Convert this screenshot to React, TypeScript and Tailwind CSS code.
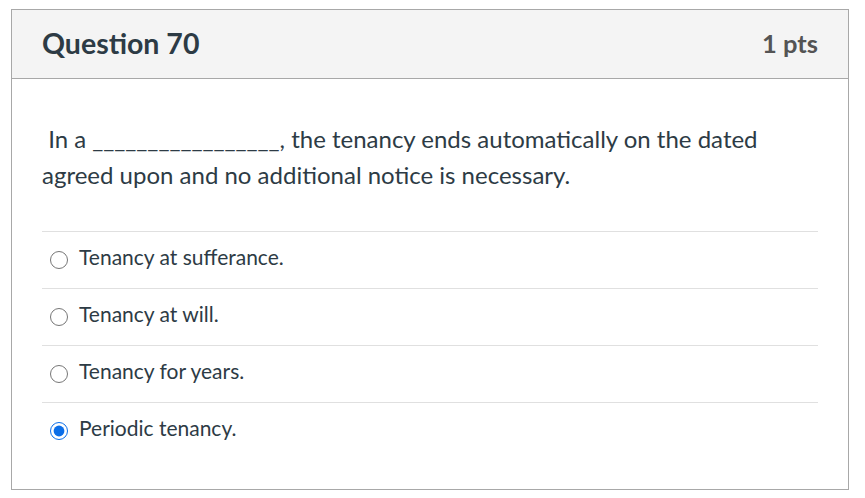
import { useState } from "react";

export default function App() {
  const [selected, setSelected] = useState(3);

  const answers = [
    "Tenancy at sufferance.",
    "Tenancy at will.",
    "Tenancy for years.",
    "Periodic tenancy.",
  ];

  return (
    <div className="w-[865px] h-[498px] bg-white pt-[9px] pl-[11px] font-['Lato','Open_Sans',sans-serif]">
      <div className="w-[838px] h-[481px] border border-[#a8a8a8] flex flex-col">
        <div className="h-[69px] bg-[#f4f4f4] border-b border-[#a8a8a8] flex items-center justify-between pl-[30px] pr-[30px] pb-[2px]">
          <h2 className="text-[28.5px] font-bold text-[#2d3b45]">Question 70</h2>
          <span className="text-[25.5px] font-bold text-[#545454]">1 pts</span>
        </div>

        <div className="px-[30px] pt-[42px]">
          <p className="text-[24px] leading-[36px] text-[#2d3b45]">
            &nbsp;In a _________________, the tenancy ends automatically on the dated agreed upon and no additional notice is necessary.
          </p>

          <div className="mt-[38px]">
            {answers.map((answer, index) => (
              <label
                key={index}
                className="h-[57px] border-t border-[#e0e0e0] flex items-center gap-[11px] pl-[8px] cursor-pointer"
              >
                <input
                  type="radio"
                  name="q70"
                  checked={selected === index}
                  onChange={() => setSelected(index)}
                  className="w-[18px] h-[18px] m-0 accent-[#0b6ee8]"
                />
                <span className="text-[21px] text-[#2d3b45] pb-[6px]">{answer}</span>
              </label>
            ))}
          </div>
        </div>
      </div>
    </div>
  );
}
